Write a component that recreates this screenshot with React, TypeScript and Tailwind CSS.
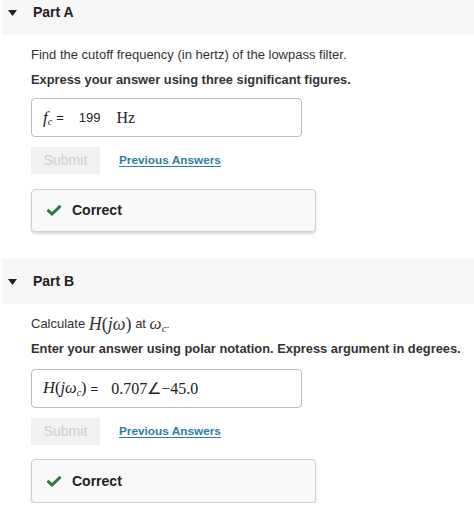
import React from 'react';

const sans = { fontFamily: '"Liberation Sans", Arial, sans-serif' };

function PartHeader({ title }: { title: string }) {
  return (
    <div className="ml-[2px] flex h-[45px] items-center bg-[#f7f7f7] pl-[6px]">
      <svg width="9" height="6" viewBox="0 0 9 6" className="mt-[1px]">
        <polygon points="0,0 9,0 4.5,6" fill="#222" />
      </svg>
      <span className="ml-[16px] text-[14px] font-bold text-[#222]">{title}</span>
    </div>
  );
}

function Check() {
  return (
    <svg width="14" height="11" viewBox="0 0 14 11">
      <polyline
        points="1.5,5.8 5,9 12.5,1.8"
        fill="none"
        stroke="#2b7d3e"
        strokeWidth="3"
        strokeLinecap="square"
      />
    </svg>
  );
}

function Actions() {
  return (
    <div className="flex items-center">
      <div className="flex h-[27px] w-[69px] items-center justify-center bg-[#f1f1f1] text-[14px] text-[#cfcfcf]">
        Submit
      </div>
      <a className="ml-[19px] text-[11.8px] font-bold text-[#2a7ea5] underline underline-offset-2">
        Previous Answers
      </a>
    </div>
  );
}

function CorrectBox({ className }: { className: string }) {
  return (
    <div
      className={`flex w-[285px] items-center rounded-[4px] border border-[#cfcfcf] bg-[#f9f9f9] pl-[15px] shadow-[0_2px_2px_rgba(0,0,0,0.15)] ${className}`}
    >
      <Check />
      <span className="ml-[11px] text-[14px] font-bold text-[#222]">Correct</span>
    </div>
  );
}

const serif = 'font-["Liberation_Serif","Times_New_Roman",serif]';

export default function App() {
  return (
    <div className="-mt-[10px] bg-white text-[#333]" style={sans}>
      <PartHeader title="Part A" />
      <div className="pl-[31px]">
        <p className="mt-[12px] text-[13px] leading-[16px]">
          Find the cutoff frequency (in hertz) of the lowpass filter.
        </p>
        <p className="mt-[9px] text-[12.85px] font-bold leading-[16px]">
          Express your answer using three significant figures.
        </p>
        <div className="mt-[10px] flex h-[39px] w-[271px] items-center rounded-[4px] border border-[#bdbdbd] bg-white pl-[11px] text-[#222]">
          <span className={`${serif} text-[17px] italic`}>
            f<sub className="text-[10px]">c</sub>
          </span>
          <span className="ml-[4px] text-[13px]">=</span>
          <span className="ml-[15px] text-[13px]">199</span>
          <span className={`${serif} ml-[16px] text-[16px]`}>Hz</span>
        </div>
        <div className="mt-[10px]">
          <Actions />
        </div>
        <CorrectBox className="mt-[15px] h-[43px]" />
      </div>

      <div className="mt-[27px]">
        <PartHeader title="Part B" />
      </div>
      <div className="pl-[31px]">
        <p className="mt-[12px] flex h-[16px] items-center text-[13px]">
          Calculate&nbsp;
          <span className={`${serif} text-[18px]`}>
            <i>H</i>(<i>jω</i>)
          </span>
          &nbsp;at&nbsp;
          <span className={`${serif} text-[17px] italic`}>
            ω<sub className="text-[11px]">c</sub>
          </span>
          <span className="text-[11px]">.</span>
        </p>
        <p className="mt-[9px] text-[12.85px] font-bold leading-[16px]">
          Enter your answer using polar notation. Express argument in degrees.
        </p>
        <div className="mt-[12px] flex h-[39px] w-[271px] items-center rounded-[4px] border border-[#bdbdbd] bg-white pl-[11px] text-[#222]">
          <span className={`${serif} text-[16.5px]`}>
            <i>H</i>(<i>jω</i>
            <sub className="text-[10px] italic">c</sub>)
          </span>
          <span className="ml-[4px] text-[13px]">=</span>
          <span className={`${serif} ml-[13px] text-[16px]`}>0.707∠−45.0</span>
        </div>
        <div className="mt-[10px]">
          <Actions />
        </div>
        <CorrectBox className="mt-[14px] h-[44px]" />
      </div>
    </div>
  );
}
